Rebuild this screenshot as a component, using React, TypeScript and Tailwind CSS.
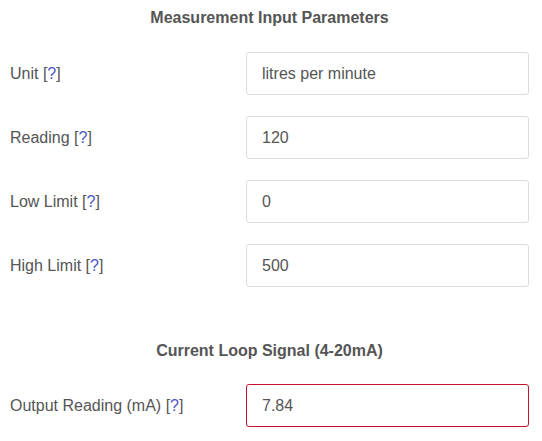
import React from 'react';

interface FieldProps {
  label: string;
  value: string;
  invalid?: boolean;
}

const Field: React.FC<FieldProps> = ({ label, value, invalid = false }) => (
  <div className="flex items-center">
    <label className="flex-1 text-[16px] text-[#555]">
      {label} [<span className="text-[#4a56c9]">?</span>]
    </label>
    <input
      readOnly
      value={value}
      className={`w-[283px] h-[43px] rounded-[3px] border bg-white px-[15px] text-[16px] text-[#555] outline-none ${
        invalid ? 'border-[#c8102e]' : 'border-[#dcdcdc]'
      }`}
    />
  </div>
);

const App: React.FC = () => {
  return (
    <div className="w-[542px] h-[441px] bg-white pl-[10px] pr-[13px] pt-[8px] font-['Liberation_Sans',Arial,sans-serif]">
      <h2 className="text-center text-[16px] leading-[20px] font-bold text-[#555]">
        Measurement Input Parameters
      </h2>
      <div className="mt-[24px] flex flex-col gap-[21px]">
        <Field label="Unit" value="litres per minute" />
        <Field label="Reading" value="120" />
        <Field label="Low Limit" value="0" />
        <Field label="High Limit" value="500" />
      </div>
      <h2 className="mt-[54px] text-center text-[16px] leading-[20px] font-bold text-[#555]">
        Current Loop Signal (4-20mA)
      </h2>
      <div className="mt-[23px]">
        <Field label="Output Reading (mA)" value="7.84" invalid />
      </div>
    </div>
  );
};

export default App;
